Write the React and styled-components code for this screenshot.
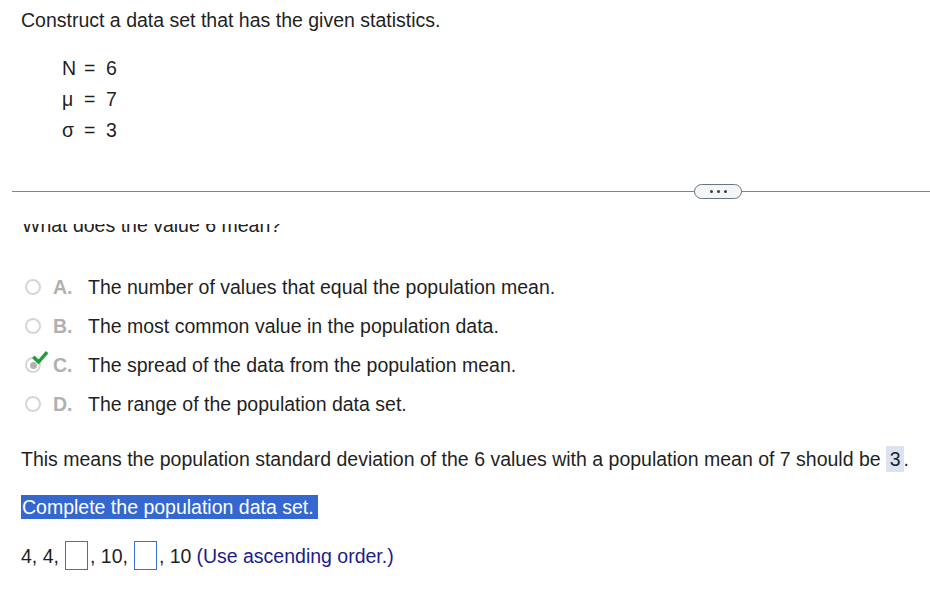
import React from "react";
import styled, { createGlobalStyle } from "styled-components";

const GlobalStyle = createGlobalStyle`
  body {
    margin: 0;
    background: #fff;
    font-family: "Liberation Sans", Arial, sans-serif;
    color: #1f1f1f;
  }
`;

const Page = styled.div`
  width: 930px;
  height: 591px;
  overflow: hidden;
  font-size: 19.5px;
`;

const Top = styled.div`
  padding: 9px 0 0 21px;
`;

const Title = styled.div`
  line-height: 22px;
`;

const Stats = styled.div`
  margin: 26px 0 0 41px;
  display: grid;
  grid-template-columns: 22px 22px auto;
  row-gap: 9px;
  line-height: 22px;
`;

const Cell = styled.span``;

const Divider = styled.div`
  margin: 50px 0 0 12px;
  position: relative;
  height: 1px;
  background: #7b8591;
`;

const More = styled.button`
  position: absolute;
  left: 682px;
  top: -7px;
  width: 48px;
  height: 15px;
  border: 1px solid #6a7582;
  border-radius: 8px;
  background: #f4f5f7;
  display: flex;
  align-items: center;
  justify-content: center;
  gap: 4px;
  padding: 0;
`;

const Dot = styled.span`
  width: 3px;
  height: 3px;
  border-radius: 50%;
  background: #3a3f46;
`;

const Clip = styled.div`
  margin: 32px 0 0 22px;
  height: 8px;
  overflow: hidden;
`;

const Clipped = styled.div`
  margin-top: -10px;
  line-height: 22px;
  color: #222;
`;

const Options = styled.div`
  margin: 44px 0 0 25px;
  display: flex;
  flex-direction: column;
  gap: 17px;
`;

const Option = styled.div`
  display: flex;
  align-items: center;
  height: 22px;
`;

const Radio = styled.span`
  position: relative;
  width: 16px;
  height: 16px;
  border: 2px solid #d6d6d6;
  border-radius: 50%;
  box-sizing: border-box;
  margin-right: 12px;
  flex: none;
  &::after {
    content: "";
    display: ${(p) => (p.checked ? "block" : "none")};
    position: absolute;
    left: 2.5px;
    top: 2.5px;
    width: 7px;
    height: 7px;
    border-radius: 50%;
    background: #b3b3b3;
  }
`;

const Check = styled.svg`
  position: absolute;
  left: 6px;
  top: -7px;
  overflow: visible;
`;

const Letter = styled.span`
  width: 35px;
  font-weight: bold;
  color: #b0b0b0;
  flex: none;
`;

const Para = styled.div`
  margin: 31px 0 0 21px;
  display: flex;
  align-items: center;
  line-height: 22px;
`;

const Answer = styled.span`
  background: #dbe3f0;
  padding: 2px 3px 2px 4px;
  margin-left: 5px;
  line-height: 22px;
`;

const Highlight = styled.div`
  margin: 23px 0 0 21px;
  display: inline-block;
  background: #3467d0;
  color: #fff;
  padding: 1px 4px 1px 1px;
  line-height: 22px;
`;

const Fill = styled.div`
  margin: 22px 0 0 21px;
  display: flex;
  align-items: center;
  line-height: 22px;
`;

const Blank = styled.span`
  display: inline-block;
  width: 21px;
  height: 27px;
  border: 1px solid #3a6fd6;
  margin: 0 2px 0 6px;
`;

const Hint = styled.span`
  color: #1c1c8c;
  margin-left: 5px;
`;

const options = [
  { letter: "A.", text: "The number of values that equal the population mean." },
  { letter: "B.", text: "The most common value in the population data." },
  { letter: "C.", text: "The spread of the data from the population mean.", checked: true },
  { letter: "D.", text: "The range of the population data set." },
];

const stats = [
  ["N", "6"],
  ["\u03bc", "7"],
  ["\u03c3", "3"],
];

export default function App() {
  return (
    <Page>
      <GlobalStyle />
      <Top>
        <Title>Construct a data set that has the given statistics.</Title>
        <Stats>
          {stats.map(([sym, val]) => (
            <React.Fragment key={sym}>
              <Cell>{sym}</Cell>
              <Cell>=</Cell>
              <Cell>{val}</Cell>
            </React.Fragment>
          ))}
        </Stats>
      </Top>
      <Divider>
        <More>
          <Dot />
          <Dot />
          <Dot />
        </More>
      </Divider>
      <Clip>
        <Clipped>What does the value 6 mean?</Clipped>
      </Clip>
      <Options>
        {options.map((o) => (
          <Option key={o.letter}>
            <Radio checked={o.checked}>
              {o.checked && (
                <Check width="14" height="12" viewBox="0 0 14 12">
                  <path d="M1.5 6 L5.5 10 L13 1.5" fill="none" stroke="#1e9e3a" strokeWidth="3.4" strokeLinecap="square" />
                </Check>
              )}
            </Radio>
            <Letter>{o.letter}</Letter>
            <span>{o.text}</span>
          </Option>
        ))}
      </Options>
      <Para>
        This means the population standard deviation of the 6 values with a population mean of 7 should be
        <Answer>3</Answer>.
      </Para>
      <Highlight>Complete the population data set.</Highlight>
      <Fill>
        4, 4,<Blank />, 10,<Blank />, 10<Hint>(Use ascending order.)</Hint>
      </Fill>
    </Page>
  );
}
